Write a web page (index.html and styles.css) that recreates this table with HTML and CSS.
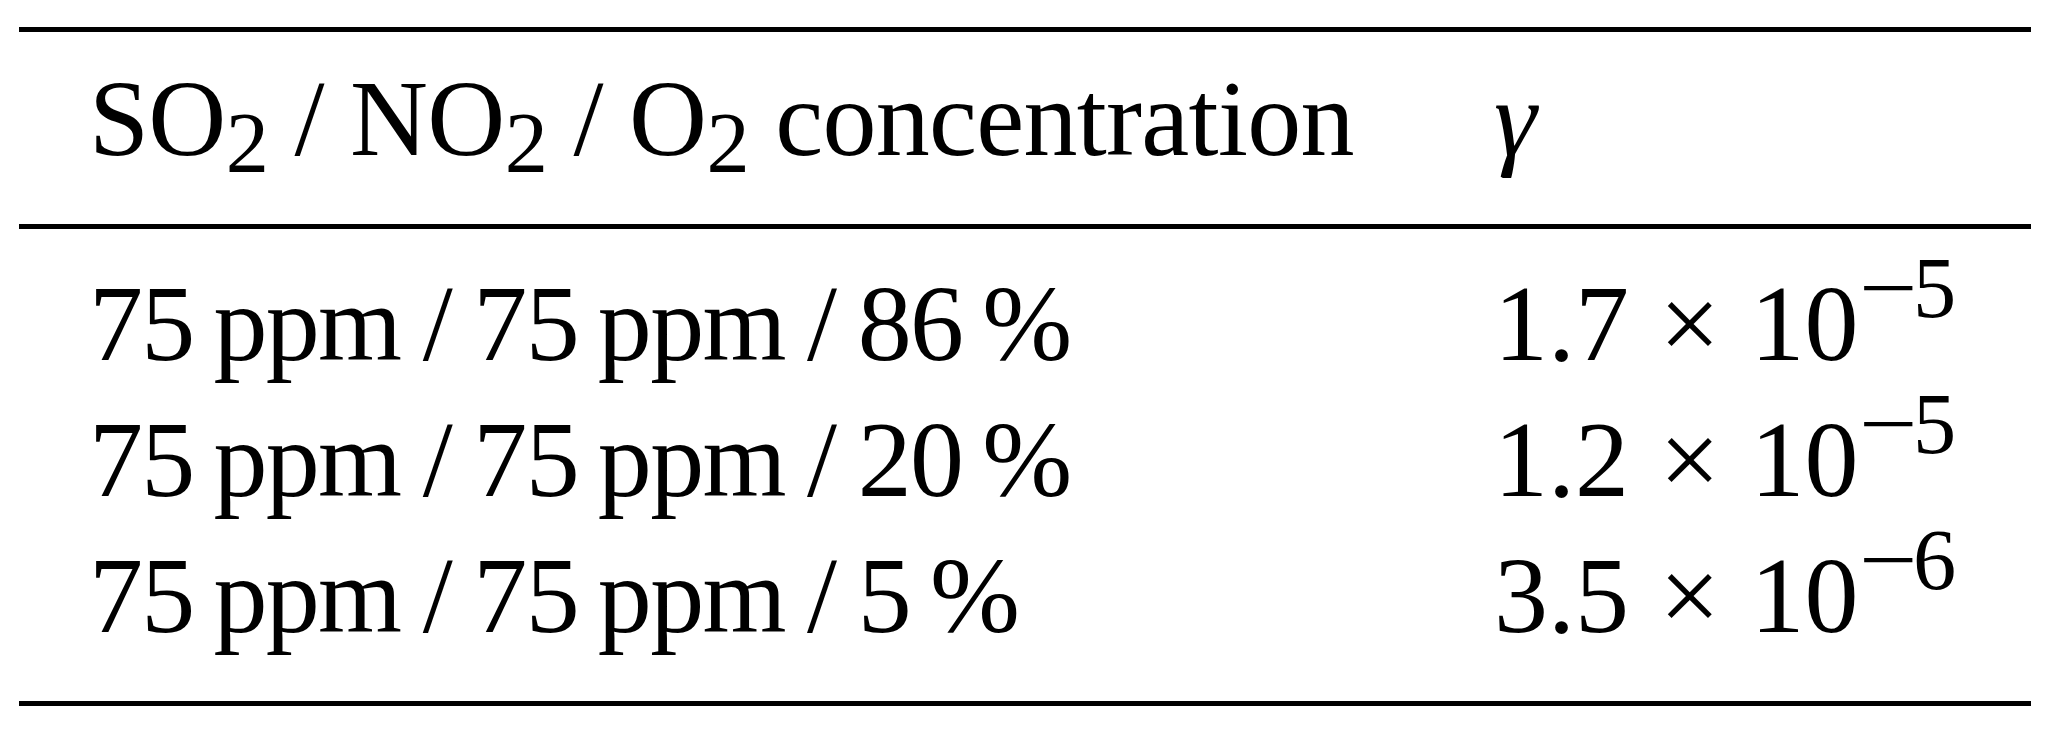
FILE: index.html
```html
<!DOCTYPE html>
<html lang="en">
<head>
  <meta charset="UTF-8" />
  <title>Uptake coefficients</title>
  <link rel="stylesheet" href="styles.css">
</head>
<body>
  <table class="results">
    <thead>
      <tr>
        <th class="conc">SO<sub>2</sub> / NO<sub>2</sub> / O<sub>2</sub> concentration</th>
        <th class="gamma"><i>γ</i></th>
      </tr>
    </thead>
    <tbody>
      <tr class="first">
        <td class="conc">75&#8201;ppm / 75&#8201;ppm / 86&#8201;%</td>
        <td class="gamma">1.7<span class="times">×</span>10<sup><span class="minus">−</span>5</sup></td>
      </tr>
      <tr>
        <td class="conc">75&#8201;ppm / 75&#8201;ppm / 20&#8201;%</td>
        <td class="gamma">1.2<span class="times">×</span>10<sup><span class="minus">−</span>5</sup></td>
      </tr>
      <tr class="last">
        <td class="conc">75&#8201;ppm / 75&#8201;ppm / 5&#8201;%</td>
        <td class="gamma">3.5<span class="times">×</span>10<sup><span class="minus">−</span>6</sup></td>
      </tr>
    </tbody>
  </table>
</body>
</html>
```

FILE: styles.css
```css
* {
  box-sizing: border-box;
}

body {
  margin: 0;
  background: #fff;
  color: #000;
  font-family: "Liberation Serif", "Times New Roman", serif;
}

.results {
  margin: 27px 0 0 19px;
  width: 2012px;
  border-collapse: separate;
  border-spacing: 0;
  font-size: 108px;
}

th, td {
  padding: 0;
  text-align: left;
  font-weight: normal;
  white-space: nowrap;
}

th {
  height: 202px;
  line-height: 108px;
  padding-top: 33px;
  padding-bottom: 51px;
  border-top: 5px solid #000;
  border-bottom: 5px solid #000;
  vertical-align: top;
}

th.conc {
  letter-spacing: -0.7px;
}

td {
  line-height: 136px;
  vertical-align: top;
}

td.conc {
  letter-spacing: -1.7px;
  word-spacing: -3px;
}

.first td {
  padding-top: 27px;
}

.last td {
  padding-bottom: 37px;
  border-bottom: 5px solid #000;
}

.conc {
  width: 1475px;
  padding-left: 70px;
}

sub, sup {
  font-size: 0.8em;
  line-height: 0;
  position: relative;
  vertical-align: baseline;
}

sub {
  top: 0.2em;
}

sup {
  top: -0.5em;
  letter-spacing: -1px;
}

.minus {
  display: inline-block;
  transform: scaleX(1.2);
  margin: 0 0.02em 0 0.06em;
}

.times {
  margin: 0 0.28em;
}
```
